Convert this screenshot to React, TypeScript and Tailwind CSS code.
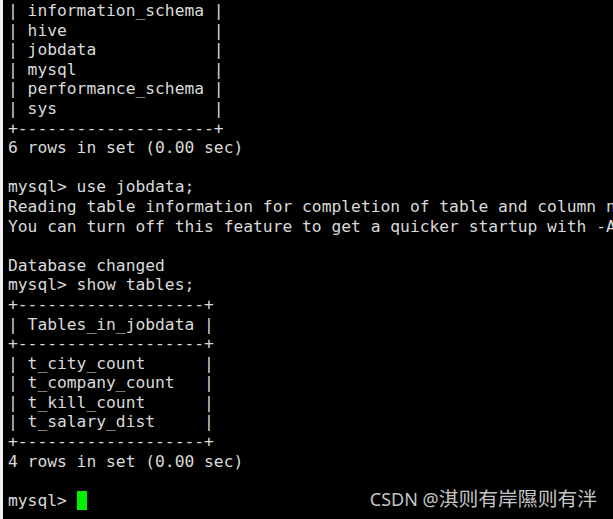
const lines = [
  "| information_schema |",
  "| hive               |",
  "| jobdata            |",
  "| mysql              |",
  "| performance_schema |",
  "| sys                |",
  "+--------------------+",
  "6 rows in set (0.00 sec)",
  "",
  "mysql> use jobdata;",
  "Reading table information for completion of table and column names",
  "You can turn off this feature to get a quicker startup with -A",
  "",
  "Database changed",
  "mysql> show tables;",
  "+-------------------+",
  "| Tables_in_jobdata |",
  "+-------------------+",
  "| t_city_count      |",
  "| t_company_count   |",
  "| t_kill_count      |",
  "| t_salary_dist     |",
  "+-------------------+",
  "4 rows in set (0.00 sec)",
  "",
];

export default function App() {
  return (
    <div className="relative flex w-[613px] h-[519px] overflow-hidden bg-black">
      {/* sliver of the window behind */}
      <div className="w-[3px] shrink-0 bg-[#f0f0f0]" />

      <div
        className="flex-1 pl-[5px] pt-[1px] text-[16.3px] leading-[19.6px] text-[#dadada] whitespace-pre overflow-hidden"
        style={{ fontFamily: '"DejaVu Sans Mono", monospace' }}
      >
        {lines.map((line, i) => (
          <div key={i} className="h-[19.6px]">
            {line}
          </div>
        ))}
        <div className="flex h-[19.6px] items-stretch">
          <span>mysql&gt; </span>
          <span className="w-[10px] bg-[#00f000]" />
        </div>
      </div>

      <div
        className="absolute right-[16px] bottom-[11px] flex items-baseline text-[#c4c4c4] text-[18px] leading-none"
        style={{ fontFamily: '"Noto Sans", "Noto Sans CJK SC", sans-serif' }}
      >
        <span>CSDN @</span>
        <span
          className="text-[19.8px]"
          style={{ fontFamily: '"Noto Sans CJK SC", sans-serif' }}
        >
          淇则有岸隰则有泮
        </span>
      </div>
    </div>
  );
}
